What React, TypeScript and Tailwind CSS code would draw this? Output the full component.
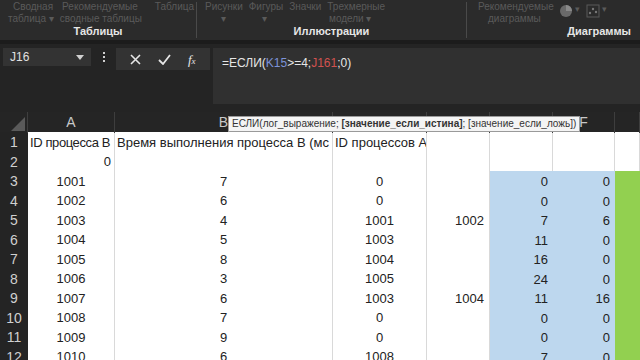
import React from "react";

const rows: (string | number | null)[][] = [
  ["ID процесса B", "Время выполнения процесса B (мс", "ID процессов A", null, null, null, null],
  ["0", null, null, null, null, null, null],
  ["1001", "7", "0", null, "0", "0", "g"],
  ["1002", "6", "0", null, "0", "0", "g"],
  ["1003", "4", "1001", "1002", "7", "6", "g"],
  ["1004", "5", "1003", null, "11", "0", "g"],
  ["1005", "8", "1004", null, "16", "0", "g"],
  ["1006", "3", "1005", null, "24", "0", "g"],
  ["1007", "6", "1003", "1004", "11", "16", "g"],
  ["1008", "7", "0", null, "0", "0", "g"],
  ["1009", "9", "0", null, "0", "0", "g"],
  ["1010", "6", "1008", null, "7", "0", "g"],
];

const cols = "grid grid-cols-[28px_87px_218px_94px_63px_63px_62px_1fr]";
const font = { fontFamily: '"Liberation Sans", Arial, sans-serif' };

function Ribbon() {
  return (
    <div className="flex h-[40px] bg-[#2b2b2b] text-[10px] leading-[11px] text-[#5a5a5a] overflow-hidden" style={font}>
      <div className="w-[197px] border-r border-[#4a4a4a] my-[2px] relative flex flex-col">
        <div className="mt-[-1px] flex gap-[9px] pl-[13px] whitespace-nowrap">
          <span>Сводная</span>
          <span>Рекомендуемые</span>
          <span className="ml-[8px]">Таблица</span>
        </div>
        <div className="mt-[1px] flex gap-[6px] pl-[8px] whitespace-nowrap">
          <span>таблица ▾</span>
          <span>сводные таблицы</span>
        </div>
        <div className="mt-auto mb-[1px] text-center text-[#e6e6e6] font-bold text-[11px]">Таблицы</div>
      </div>
      <div className="w-[270px] border-r border-[#4a4a4a] my-[2px] flex flex-col">
        <div className="mt-[-1px] flex gap-[6px] pl-[8px] whitespace-nowrap">
          <span>Рисунки</span>
          <span>Фигуры</span>
          <span>Значки</span>
          <span>Трехмерные</span>
        </div>
        <div className="mt-[1px] flex whitespace-nowrap">
          <span className="ml-[24px]">▾</span>
          <span className="ml-[36px]">▾</span>
          <span className="ml-[62px]">модели ▾</span>
        </div>
        <div className="mt-auto mb-[1px] text-center text-[#e6e6e6] font-bold text-[11px]">Иллюстрации</div>
      </div>
      <div className="flex-1 my-[2px] flex flex-col">
        <div className="flex">
          <div className="flex flex-col pl-[11px]">
            <span className="mt-[-1px] whitespace-nowrap">Рекомендуемые</span>
            <span className="mt-[1px] pl-[10px] whitespace-nowrap">диаграммы</span>
          </div>
          <div className="flex items-start ml-[5px] mt-[2px] gap-[2px]">
            <svg width="14" height="14" viewBox="0 0 14 14">
              <circle cx="7" cy="7" r="6" fill="#6a6a6a" />
              <path d="M7 7 L7 1 A6 6 0 0 1 13 7 Z" fill="#8a8a8a" />
            </svg>
            <span className="text-[9px]">▾</span>
            <svg width="14" height="14" viewBox="0 0 14 14" className="ml-[4px]">
              <rect x="1" y="1" width="12" height="12" fill="none" stroke="#5a5a5a" />
              <circle cx="4" cy="9" r="1.2" fill="#777" />
              <circle cx="7" cy="5" r="1.2" fill="#777" />
              <circle cx="10" cy="8" r="1.2" fill="#777" />
            </svg>
            <span className="text-[9px]">▾</span>
          </div>
        </div>
        <div className="mt-auto mb-[1px] pr-[9px] text-right text-[#e6e6e6] font-bold text-[11px]">Диаграммы</div>
      </div>
    </div>
  );
}

function FormulaBar() {
  return (
    <div className="h-[68px] bg-[#242424] flex pt-[4px]" style={font}>
      <div className="flex items-start">
        <div className="ml-[3px] w-[88px] h-[18px] bg-[#333333] flex items-center justify-between px-[7px] text-[12px] text-[#e0e0e0]">
          <span>J16</span>
          <svg width="8" height="5" viewBox="0 0 8 5"><path d="M0 0 H8 L4 5 Z" fill="#d0d0d0" /></svg>
        </div>
        <div className="w-[25px] h-[18px] flex flex-col items-center justify-center gap-[2px]">
          <span className="w-[2px] h-[2px] bg-[#cfcfcf]" />
          <span className="w-[2px] h-[2px] bg-[#cfcfcf]" />
          <span className="w-[2px] h-[2px] bg-[#cfcfcf]" />
        </div>
        <div className="w-[94px] h-[22px] bg-[#333333] flex items-center justify-around px-[6px]">
          <svg width="11" height="11" viewBox="0 0 11 11"><path d="M1 1 L10 10 M10 1 L1 10" stroke="#e6e6e6" strokeWidth="1.6" /></svg>
          <svg width="13" height="11" viewBox="0 0 13 11"><path d="M1 6 L5 10 L12 1" stroke="#e6e6e6" strokeWidth="1.8" fill="none" /></svg>
          <span className="italic text-[#e6e6e6] text-[13px] leading-none" style={{ fontFamily: '"Liberation Serif", serif' }}>f<span className="text-[9px]">x</span></span>
        </div>
      </div>
      <div className="ml-[3px] flex-1 h-[56px] bg-[#303030] pl-[9px] pt-[6px] text-[12px] text-[#e6e6e6]">
        =ЕСЛИ(<span className="text-[#7c93d8]">K15</span>&gt;=4;<span className="text-[#d0524f]">J161</span>;0)
      </div>
    </div>
  );
}

function Header() {
  const letters = ["", "A", "B", "", "", "", "F", ""];
  return (
    <div className={`${cols} h-[20px] bg-[#252525] relative`} style={font}>
      {letters.map((l, i) => (
        <div key={i} className="flex items-center justify-center text-[14px] text-[#c8c8c8] border-r border-[#3e3e3e]">
          {i === 0 ? (
            <svg width="14" height="14" viewBox="0 0 14 14" className="ml-[8px] mt-[2px]"><path d="M14 0 L14 14 L0 14 Z" fill="#5a5a5a" /></svg>
          ) : (
            l
          )}
        </div>
      ))}
      <div className="absolute left-[228px] top-[4px] h-[16px] bg-[#f4f4f4] border border-[#9a9a9a] px-[3px] text-[10px] leading-[14px] text-[#333] whitespace-nowrap">
        ЕСЛИ(лог_выражение; <b>[значение_если_истина]</b>; [значение_если_ложь])
      </div>
    </div>
  );
}

function Grid() {
  return (
    <div style={font}>
      {rows.map((r, ri) => {
        const blue = ri >= 2;
        return (
          <div key={ri} className={`${cols} h-[19.5px]`}>
            <div className="bg-[#242424] border-b border-[#3a3a3a] flex items-center justify-center text-[14px] text-[#d0d0d0]">{ri + 1}</div>
            {r.map((v, ci) => {
              let cls = "bg-white border-r border-b border-[#d9d9d9] text-[#222] text-[13px] flex items-center whitespace-nowrap overflow-hidden";
              if (ci === 0) cls += ri === 1 ? " justify-end pr-[3px]" : ri === 0 ? " pl-[2px] tracking-[-0.4px]" : " justify-center";
              if (ci === 1) cls += ri === 0 ? " pl-[2px]" : " justify-center";
              if (ci === 2) cls += ri === 0 ? " pl-[2px]" : " justify-center";
              if (ci === 3) cls += " justify-end pr-[5px]";
              if ((ci === 4 || ci === 5) && blue) cls = cls.replace("bg-white", "bg-[#bdd7ee]").replace("border-r border-b border-[#d9d9d9]", "") + " justify-end pr-[5px]";
              if (ci === 6 && v === "g") cls = "bg-[#92d050]";
              return (
                <div key={ci} className={cls}>
                  {v === "g" ? null : v}
                </div>
              );
            })}
          </div>
        );
      })}
    </div>
  );
}

export default function App() {
  return (
    <div className="w-[640px] h-[360px] overflow-hidden bg-[#1e1e1e]">
      <Ribbon />
      <div className="h-[4px] bg-[#1c1c1c]" />
      <FormulaBar />
      <Header />
      <Grid />
    </div>
  );
}
